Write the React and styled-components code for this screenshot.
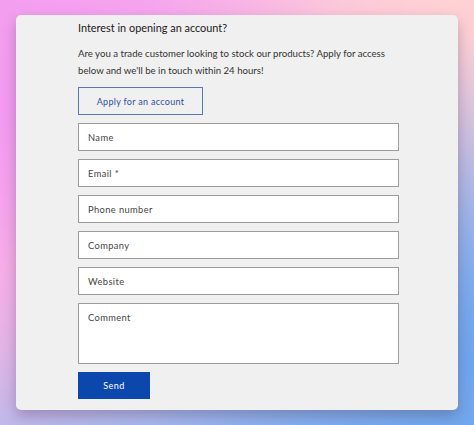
import React from "react";
import styled, { createGlobalStyle } from "styled-components";

const GlobalStyle = createGlobalStyle`
  html, body {
    margin: 0;
    padding: 0;
  }
  body {
    width: 474px;
    height: 425px;
    overflow: hidden;
    font-family: "Lato", "Noto Sans", sans-serif;
    background:
      radial-gradient(circle at 100% 85%, #6ea6ee 0%, rgba(110, 166, 238, 0) 55%),
      radial-gradient(circle at 0% 25%, #f59af2 0%, rgba(245, 154, 242, 0) 60%),
      radial-gradient(circle at 95% 0%, #ffd2d4 0%, rgba(255, 210, 212, 0) 50%),
      linear-gradient(160deg, #f4a8ee 0%, #f9c4dc 45%, #a8b8ee 80%, #80b0f2 100%);
  }
`;

const Card = styled.div`
  box-sizing: border-box;
  margin: 15px 16px 0;
  width: 442px;
  height: 395px;
  background: #f0f0f0;
  border-radius: 5px;
  box-shadow: 0 6px 14px rgba(80, 60, 90, 0.35);
  padding: 4px 0 0 62px;
`;

const Column = styled.div`
  width: 321px;
  display: flex;
  flex-direction: column;
`;

const Title = styled.h2`
  margin: 0;
  font-size: 10.9px;
  font-weight: 400;
  line-height: 18px;
  color: #1a1a1a;
`;

const Intro = styled.p`
  margin: 8px 0 0;
  font-size: 9.65px;
  line-height: 16.5px;
  color: #333;
`;

const OutlineButton = styled.button`
  box-sizing: border-box;
  margin-top: 9px;
  width: 125px;
  height: 28px;
  background: transparent;
  border: 1px solid #5a76b4;
  color: #2f4f9c;
  font-family: inherit;
  font-size: 9px;
  letter-spacing: 0.3px;
  padding: 0;
`;

const Fields = styled.div`
  margin-top: 8px;
  display: flex;
  flex-direction: column;
  gap: 8px;
`;

const Field = styled.div`
  box-sizing: border-box;
  height: ${(p) => (p.$tall ? "61px" : "28px")};
  background: #fff;
  border: 1px solid #9c9c9c;
  padding: ${(p) => (p.$tall ? "8px 9px" : "0 9px")};
  display: flex;
  align-items: ${(p) => (p.$tall ? "flex-start" : "center")};
  font-size: 9.3px;
  letter-spacing: 0.4px;
  color: #444;
`;

const SendButton = styled.button`
  box-sizing: border-box;
  margin-top: 8px;
  width: 72px;
  height: 27px;
  background: #0c47ad;
  border: none;
  color: #fff;
  font-family: inherit;
  font-size: 9px;
  letter-spacing: 0.4px;
  padding: 0;
`;

const fields = ["Name", "Email *", "Phone number", "Company", "Website"];

export default function App() {
  return (
    <>
      <GlobalStyle />
      <Card>
        <Column>
          <Title>Interest in opening an account?</Title>
          <Intro>
            Are you a trade customer looking to stock our products? Apply for access
            below and we'll be in touch within 24 hours!
          </Intro>
          <OutlineButton>Apply for an account</OutlineButton>
          <Fields>
            {fields.map((f) => (
              <Field key={f}>{f}</Field>
            ))}
            <Field $tall>Comment</Field>
          </Fields>
          <SendButton>Send</SendButton>
        </Column>
      </Card>
    </>
  );
}
